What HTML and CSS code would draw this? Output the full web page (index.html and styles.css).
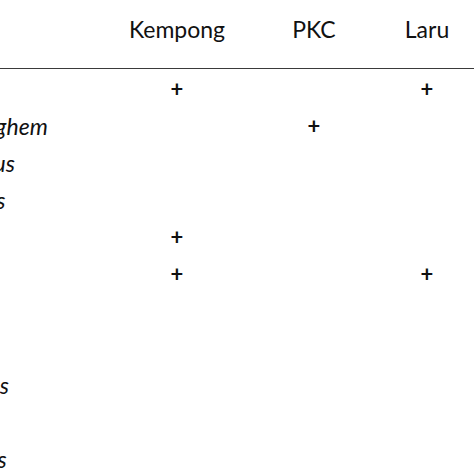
FILE: index.html
```html
<!DOCTYPE html>
<html>
<head>
<meta charset="utf-8">
<link rel="stylesheet" href="styles.css">
</head>
<body>
<div class="table">
  <div class="row head">
    <div class="cell name"></div>
    <div class="cell">Kempong</div>
    <div class="cell">PKC</div>
    <div class="cell">Laru</div>
  </div>
  <div class="row"><div class="cell name">Rhizopus sp.</div><div class="cell mark">+</div><div class="cell"></div><div class="cell mark">+</div></div>
  <div class="row"><div class="cell name">Absidia Van Tieghem</div><div class="cell"></div><div class="cell mark">+</div><div class="cell"></div></div>
  <div class="row"><div class="cell name">Aspergillus flavus</div><div class="cell"></div><div class="cell"></div><div class="cell"></div></div>
  <div class="row"><div class="cell name">Mucor javanicus</div><div class="cell"></div><div class="cell"></div><div class="cell"></div></div>
  <div class="row"><div class="cell name">Candida sp.</div><div class="cell mark">+</div><div class="cell"></div><div class="cell"></div></div>
  <div class="row"><div class="cell name">Mucor rouxii</div><div class="cell mark">+</div><div class="cell"></div><div class="cell mark">+</div></div>
  <div class="row"><div class="cell name">Penicillium sp.</div><div class="cell"></div><div class="cell"></div><div class="cell"></div></div>
  <div class="row"><div class="cell name">Monascus sp.</div><div class="cell"></div><div class="cell"></div><div class="cell"></div></div>
  <div class="row"><div class="cell name">Aspergillus ustus</div><div class="cell"></div><div class="cell"></div><div class="cell"></div></div>
  <div class="row"><div class="cell name">Endomycopsis</div><div class="cell"></div><div class="cell"></div><div class="cell"></div></div>
  <div class="row"><div class="cell name">Mucor piriformis</div><div class="cell"></div><div class="cell"></div><div class="cell"></div></div>
</div>
</body>
</html>
```
FILE: styles.css
```css
html, body {
  margin: 0;
  padding: 0;
  background: #ffffff;
  overflow: hidden;
}
body {
  width: 474px;
  height: 474px;
  font-family: Lato, "Open Sans", "Liberation Sans", sans-serif;
  color: #111111;
}
.table {
  display: flex;
  flex-direction: column;
  width: 624px;
  margin-left: -150px;
}
.row {
  display: grid;
  grid-template-columns: 267px 120px 154px 72px;
  align-items: center;
  height: 37px;
  font-size: 23px;
}
.head {
  height: 69px;
  align-items: start;
  padding-top: 15px;
  box-sizing: border-box;
  border-bottom: 1.5px solid #3a3a3a;
}
.head + .row {
  margin-top: 1px;
}
.cell {
  text-align: center;
  white-space: nowrap;
}
.mark {
  font-weight: 700;
  font-size: 22px;
}
.name {
  text-align: left;
  font-style: italic;
}
```
